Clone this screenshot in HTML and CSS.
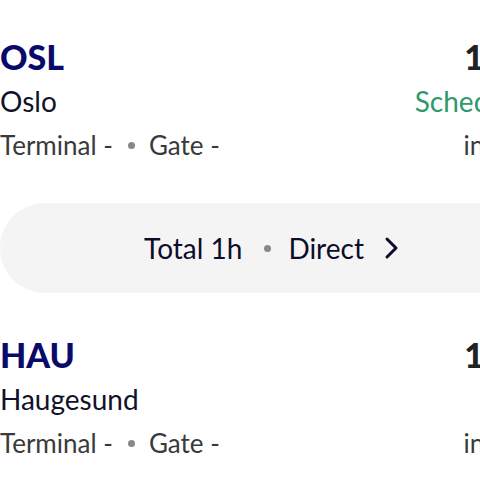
FILE: index.html
```html
<!DOCTYPE html>
<html>
<head>
<meta charset="utf-8">
<link rel="stylesheet" href="styles.css">
</head>
<body>
<div class="page">
  <section class="leg">
    <div class="col left">
      <div class="code">OSL</div>
      <div class="city">Oslo</div>
      <div class="meta"><span>Terminal -</span><span class="dot"></span><span>Gate -</span></div>
    </div>
    <div class="col right">
      <div class="time">10:00</div>
      <div class="status">Scheduled</div>
      <div class="meta">in time</div>
    </div>
  </section>
  <div class="summary">
    <span>Total 1h</span><span class="dot"></span><span>Direct</span>
    <svg class="chev" viewBox="0 0 16 24" width="16" height="24"><path d="M3 3 L12 12 L3 21" fill="none" stroke="#0d0d2b" stroke-width="3" stroke-linecap="round" stroke-linejoin="round"/></svg>
  </div>
  <section class="leg">
    <div class="col left">
      <div class="code">HAU</div>
      <div class="city">Haugesund</div>
      <div class="meta"><span>Terminal -</span><span class="dot"></span><span>Gate -</span></div>
    </div>
    <div class="col right">
      <div class="time">11:00</div>
      <div class="status">&nbsp;</div>
      <div class="meta">in time</div>
    </div>
  </section>
</div>
</body>
</html>
```
FILE: styles.css
```css
html, body { margin: 0; padding: 0; background: #fff; overflow: hidden; }
body { font-family: Lato, "Noto Sans", sans-serif; }
.page { width: 544px; padding-top: 34px; }
.leg { display: flex; justify-content: space-between; }
.col { display: flex; flex-direction: column; }
.right { align-items: flex-end; padding-right: 2px; }
.code { font-size: 34px; font-weight: 900; color: #0a0a6a; line-height: 45px; }
.time { font-size: 34px; font-weight: 900; color: #222; line-height: 45px; letter-spacing: -2px; }
.city { font-size: 28px; color: #11112a; line-height: 45px; }
.status { font-size: 28px; color: #2e9a6c; line-height: 45px; }
.meta { font-size: 26px; color: #3a3a3a; line-height: 42px; display: flex; align-items: center; }
.dot { width: 7px; height: 7px; border-radius: 50%; background: #888; margin: 0 14px 0 15px; display: inline-block; }
.summary { margin: 37px 0 39px 0; height: 90px; border-radius: 45px; background: #f4f4f4; display: flex; align-items: center; justify-content: center; font-size: 28px; color: #0d0d2b; }
.summary .dot { margin: 0 17px 0 22px; }
.chev { margin-left: 20px; }
```
